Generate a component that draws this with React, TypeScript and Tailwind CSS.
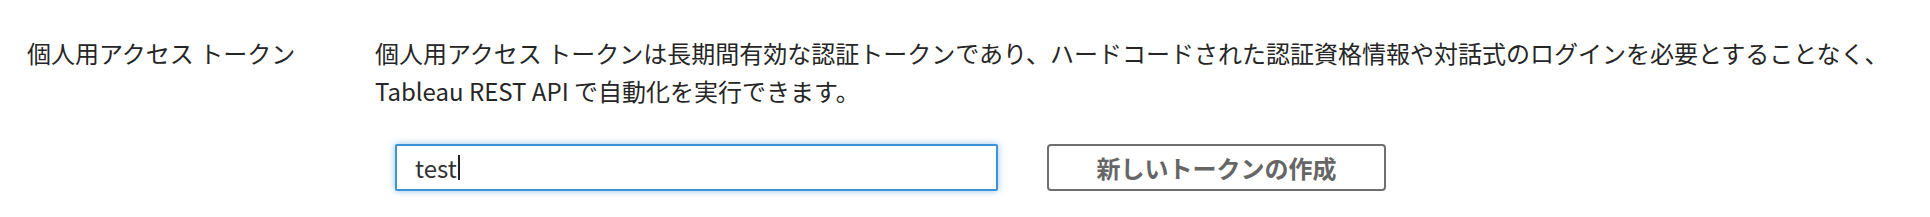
export default function App() {
  return (
    <div className="h-[217px] w-[1930px] bg-white font-['Noto_Sans_CJK_JP','Noto_Sans',sans-serif] text-[#262626]">
      <div className="flex items-start pl-[27px] pr-[20px] pt-[34px]">
        <div className="w-[348px] shrink-0 text-[24px] leading-[38px]">
          個人用アクセス トークン
        </div>
        <div className="min-w-0 flex-1">
          <p className="text-[24px] leading-[38px]">
            個人用アクセス トークンは長期間有効な認証トークンであり、ハードコードされた認証資格情報や対話式のログインを必要とすることなく、Tableau REST API で自動化を実行できます。
          </p>
          <div className="mt-[34px] flex items-center gap-[49px] pl-[20px]">
            <div className="flex h-[47px] w-[603px] items-center rounded-[2px] border-2 border-[#3b93d8] bg-white pl-[18px] text-[24px] text-[#333] shadow-[0_0_7px_rgba(59,147,216,0.55)]">
              <span>test</span>
              <span className="ml-[1px] h-[25px] w-[2px] bg-[#222]" />
            </div>
            <button
              type="button"
              className="flex h-[47px] w-[339px] items-center justify-center rounded-[4px] border-2 border-[#6f6f6f] bg-white text-[24px] font-bold text-[#666]"
            >
              新しいトークンの作成
            </button>
          </div>
        </div>
      </div>
    </div>
  );
}
